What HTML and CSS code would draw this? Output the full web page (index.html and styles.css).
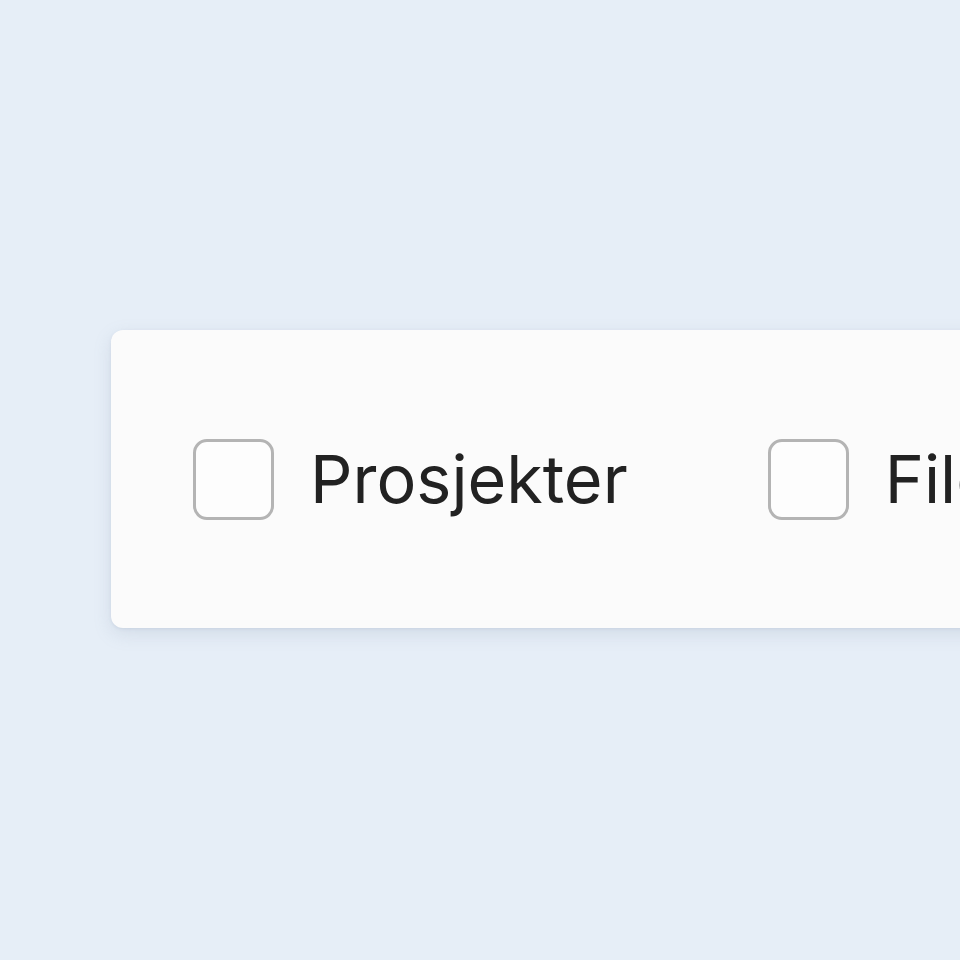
FILE: index.html
```html
<!DOCTYPE html>
<html lang="nb">
<head>
  <meta charset="UTF-8" />
  <meta name="viewport" content="width=device-width, initial-scale=1.0"/>
  <title>Filter</title>
  <link rel="stylesheet" href="styles.css">
</head>
<body>
  <div class="card">
    <label class="option">
      <span class="check"></span>
      <span class="label">Prosjekter</span>
    </label>
    <label class="option">
      <span class="check"></span>
      <span class="label">Filer</span>
    </label>
  </div>
</body>
</html>
```

FILE: styles.css
```css
* {
  box-sizing: border-box;
  margin: 0;
  padding: 0;
}

html, body {
  height: 100%;
  overflow: hidden;
}

body {
  background-color: #e6eef7;
  font-family: Inter, "Noto Sans", sans-serif;
  padding: 330px 0 0 111px;
}

.card {
  width: 1100px;
  height: 298px;
  background-color: #fbfbfb;
  border-radius: 12px;
  box-shadow: 0 6px 18px rgba(120, 140, 165, 0.18), 0 1px 3px rgba(120, 140, 165, 0.15);
  display: flex;
  align-items: center;
  padding-left: 82px;
  gap: 140px;
}

.option {
  display: flex;
  align-items: center;
  gap: 36px;
}

.check {
  width: 81px;
  height: 81px;
  border: 3px solid #b4b4b4;
  border-radius: 14px;
  background-color: #fdfdfd;
}

.label {
  font-size: 66.5px;
  color: #222;
  line-height: 1;
}
```
